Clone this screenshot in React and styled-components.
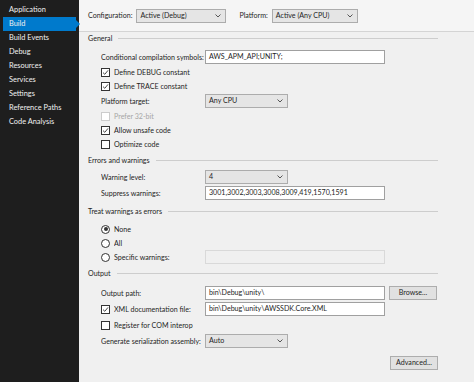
import React from 'react';
import styled, { createGlobalStyle } from 'styled-components';

const Global = createGlobalStyle`
  html, body { margin: 0; padding: 0; }
  body {
    background: #f0f0f0;
    font-family: Lato, "Open Sans", sans-serif;
    font-size: 7.1px;
    color: #1e1e1e;
    white-space: nowrap;
  }
`;

const Frame = styled.div`
  display: flex;
  width: 474px;
  height: 382px;
  overflow: hidden;
`;

const Sidebar = styled.nav`
  width: 79px;
  flex: none;
  background: #1e1e1e;
  padding-top: 3px;
  box-sizing: border-box;
  font-size: 7.4px;
`;

const NavItem = styled.div`
  position: relative;
  height: 14px;
  line-height: 14px;
  margin-left: 3px;
  width: 73px;
  padding-left: 6px;
  box-sizing: border-box;
  color: #f1f1f1;
  background: ${p => (p.active ? '#007acc' : 'transparent')};
  &::after {
    content: '';
    display: ${p => (p.active ? 'block' : 'none')};
    position: absolute;
    right: -4px;
    top: 3px;
    border-top: 4px solid transparent;
    border-bottom: 4px solid transparent;
    border-left: 4px solid #007acc;
  }
`;

const Main = styled.main`
  flex: 1;
  display: flex;
  flex-direction: column;
  background: #f0f0f0;
`;

const Toolbar = styled.div`
  height: 31px;
  flex: none;
  display: flex;
  align-items: center;
  padding-left: 9px;
  background: #f5f5f5;
  border-bottom: 1px solid #d4d4d4;
  gap: 4px;
`;

const Content = styled.div`
  padding-left: 9px;
  width: 350px;
`;

const Header = styled.div`
  display: flex;
  align-items: center;
  height: 13px;
  margin-top: ${p => p.mt || 0}px;
  margin-bottom: ${p => p.mb || 0}px;
  gap: 6px;
  &::after {
    content: '';
    flex: 1;
    height: 1px;
    background: #cdcdcd;
  }
`;

const Row = styled.div`
  display: flex;
  align-items: center;
  height: ${p => p.h || 14}px;
  padding-left: 13px;
  margin-top: ${p => p.mt || 0}px;
  justify-content: ${p => (p.end ? 'flex-end' : 'flex-start')};
  color: ${p => (p.disabled ? '#a6a6a6' : '#1e1e1e')};
`;

const Label = styled.span`
  width: ${p => p.w || 104}px;
  flex: none;
  overflow: hidden;
`;

const Input = styled.div`
  box-sizing: border-box;
  width: ${p => p.w || 180}px;
  height: 14px;
  line-height: 12px;
  padding-left: 3px;
  background: ${p => (p.disabled ? '#f0f0f0' : '#ffffff')};
  border: 1px solid ${p => (p.disabled ? '#d9d9d9' : '#a0a0a0')};
  overflow: hidden;
`;

const Select = styled.div`
  box-sizing: border-box;
  width: ${p => p.w || 83}px;
  height: 14px;
  line-height: 12px;
  padding-left: 3px;
  margin-right: ${p => p.mr || 0}px;
  background: #e5e5e5;
  border: 1px solid #acacac;
  display: flex;
  align-items: center;
  justify-content: space-between;
  svg { margin-right: 4px; }
`;

const Box = styled.span`
  box-sizing: border-box;
  width: 9px;
  height: 9px;
  margin-right: 4px;
  flex: none;
  display: inline-flex;
  align-items: center;
  justify-content: center;
  background: #fff;
  border: 1px solid ${p => (p.disabled ? '#cccccc' : '#333333')};
  border-radius: ${p => (p.round ? '50%' : '0')};
`;

const Dot = styled.span`
  width: 4px;
  height: 4px;
  border-radius: 50%;
  background: #333;
`;

const Button = styled.div`
  box-sizing: border-box;
  width: 48px;
  height: 14px;
  line-height: 12px;
  text-align: center;
  background: #e1e1e1;
  border: 1px solid #adadad;
  margin-left: ${p => p.ml || 0}px;
`;

const Chevron = () => (
  <svg width="6" height="4" viewBox="0 0 6 4">
    <path d="M0.5 0.5 L3 3 L5.5 0.5" fill="none" stroke="#444" strokeWidth="0.9" />
  </svg>
);

const Tick = () => (
  <svg width="7" height="7" viewBox="0 0 7 7">
    <path d="M1 3.6 L2.8 5.3 L6 1.4" fill="none" stroke="#333" strokeWidth="0.9" />
  </svg>
);

const Check = ({ checked, disabled, children }) => (
  <Row disabled={disabled}>
    <Box disabled={disabled}>{checked && <Tick />}</Box>
    {children}
  </Row>
);

const Radio = ({ checked, children, extra }) => (
  <Row>
    <Box round>{checked && <Dot />}</Box>
    <Label w={91}>{children}</Label>
    {extra}
  </Row>
);

const nav = ['Application', 'Build', 'Build Events', 'Debug', 'Resources', 'Services', 'Settings', 'Reference Paths', 'Code Analysis'];

export default function App() {
  return (
    <Frame>
      <Global />
      <Sidebar>
        {nav.map(n => (
          <NavItem key={n} active={n === 'Build'}>{n}</NavItem>
        ))}
      </Sidebar>
      <Main>
        <Toolbar>
          <span>Configuration:</span>
          <Select w={90} mr={9}>Active (Debug)<Chevron /></Select>
          <span>Platform:</span>
          <Select w={86}>Active (Any CPU)<Chevron /></Select>
        </Toolbar>
        <Content>
          <Header mb={4}>General</Header>
          <Row h={16}>
            <Label>Conditional compilation symbols:</Label>
            <Input>AWS_APM_API;UNITY;</Input>
          </Row>
          <Check checked>Define DEBUG constant</Check>
          <Check checked>Define TRACE constant</Check>
          <Row h={16}>
            <Label>Platform target:</Label>
            <Select>Any CPU<Chevron /></Select>
          </Row>
          <Check disabled>Prefer 32-bit</Check>
          <Check checked>Allow unsafe code</Check>
          <Check>Optimize code</Check>

          <Header mt={3} mb={2}>Errors and warnings</Header>
          <Row h={16}>
            <Label>Warning level:</Label>
            <Select>4<Chevron /></Select>
          </Row>
          <Row h={16}>
            <Label>Suppress warnings:</Label>
            <Input>3001,3002,3003,3008,3009,419,1570,1591</Input>
          </Row>

          <Header mt={4} mb={4}>Treat warnings as errors</Header>
          <Radio checked>None</Radio>
          <Radio>All</Radio>
          <Radio extra={<Input disabled />}>Specific warnings:</Radio>

          <Header mt={3} mb={5}>Output</Header>
          <Row h={16}>
            <Label>Output path:</Label>
            <Input>bin\Debug\unity\</Input>
            <Button ml={4}>Browse...</Button>
          </Row>
          <Row h={16}>
            <Box><Tick /></Box>
            <Label w={91}>XML documentation file:</Label>
            <Input>bin\Debug\unity\AWSSDK.Core.XML</Input>
          </Row>
          <Row h={16}>
            <Box />
            Register for COM interop
          </Row>
          <Row h={16}>
            <Label>Generate serialization assembly:</Label>
            <Select>Auto<Chevron /></Select>
          </Row>
          <Row h={14} mt={7} end>
            <Button>Advanced...</Button>
          </Row>
        </Content>
      </Main>
    </Frame>
  );
}
